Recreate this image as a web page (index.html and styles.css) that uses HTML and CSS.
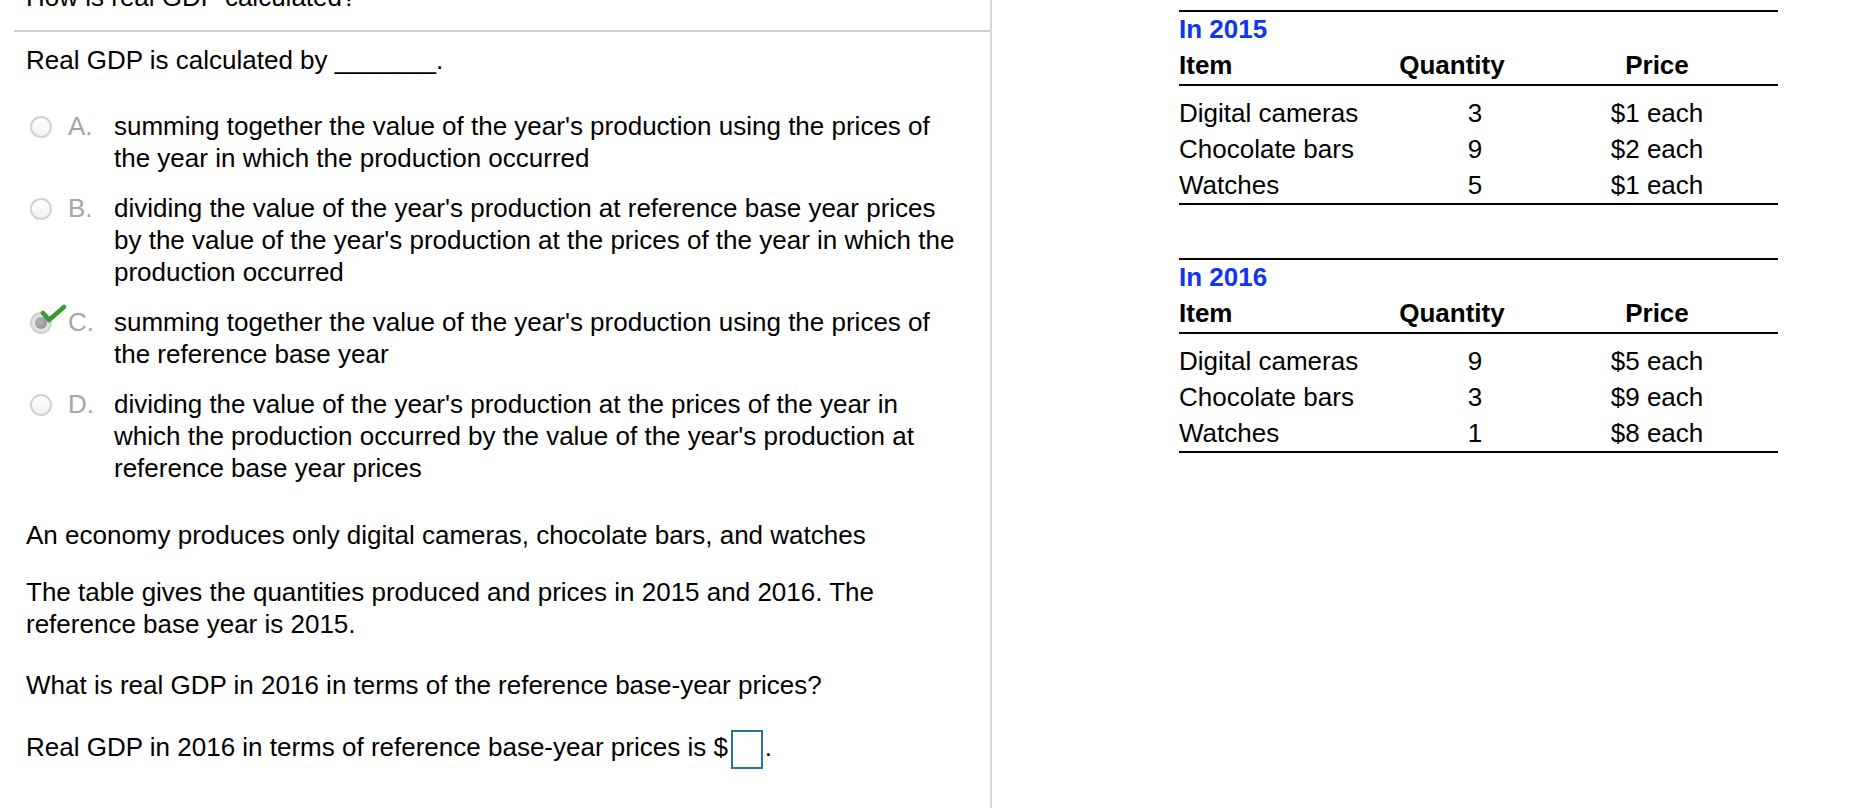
FILE: index.html
```html
<!DOCTYPE html>
<html lang="en">
<head>
    <meta charset="UTF-8">
    <meta name="viewport" content="width=device-width, initial-scale=1.0">
    <title>Real GDP</title>
    <link rel="stylesheet" href="styles.css">
</head>
<body>
    <div class="page">
        <div class="question-pane">
            <div class="question-title">How is real GDP calculated?</div>

            <div class="question-body">
                <p class="prompt">Real GDP is calculated by _______.</p>

                <ul class="choices">
                    <li class="choice">
                        <span class="radio"></span>
                        <span class="letter">A.</span>
                        <span class="choice-text">summing together the value of the year's production using the prices of the year in which the production occurred</span>
                    </li>
                    <li class="choice">
                        <span class="radio"></span>
                        <span class="letter">B.</span>
                        <span class="choice-text">dividing the value of the year's production at reference base year prices by the value of the year's production at the prices of the year in which the production occurred</span>
                    </li>
                    <li class="choice">
                        <span class="radio checked">
                            <svg class="check" width="28" height="22" viewBox="0 0 28 22">
                                <path d="M3 9 L9 16 L24 3" fill="none" stroke="#3a9a30" stroke-width="4.5" stroke-linecap="round" stroke-linejoin="round"/>
                            </svg>
                        </span>
                        <span class="letter">C.</span>
                        <span class="choice-text">summing together the value of the year's production using the prices of the reference base year</span>
                    </li>
                    <li class="choice">
                        <span class="radio"></span>
                        <span class="letter">D.</span>
                        <span class="choice-text">dividing the value of the year's production at the prices of the year in which the production occurred by the value of the year's production at reference base year prices</span>
                    </li>
                </ul>

                <p class="info first">An economy produces only digital cameras, chocolate bars, and watches</p>
                <p class="info">The table gives the quantities produced and prices in 2015 and 2016. The reference base year is 2015.</p>
                <p class="info">What is real GDP in 2016 in terms of the reference base-year prices?</p>
                <p class="info answer-line">Real GDP in 2016 in terms of reference base-year prices is $<span class="answer-box"></span>.</p>
            </div>
        </div>

        <div class="data-pane">
            <div class="data-table">
                <div class="table-year">In 2015</div>
                <div class="table-head">
                    <span>Item</span>
                    <span class="center">Quantity</span>
                    <span class="center">Price</span>
                </div>
                <div class="table-rows">
                    <div class="table-row"><span>Digital cameras</span><span class="qty">3</span><span class="center">$1 each</span></div>
                    <div class="table-row"><span>Chocolate bars</span><span class="qty">9</span><span class="center">$2 each</span></div>
                    <div class="table-row"><span>Watches</span><span class="qty">5</span><span class="center">$1 each</span></div>
                </div>
            </div>

            <div class="data-table second">
                <div class="table-year">In 2016</div>
                <div class="table-head">
                    <span>Item</span>
                    <span class="center">Quantity</span>
                    <span class="center">Price</span>
                </div>
                <div class="table-rows">
                    <div class="table-row"><span>Digital cameras</span><span class="qty">9</span><span class="center">$5 each</span></div>
                    <div class="table-row"><span>Chocolate bars</span><span class="qty">3</span><span class="center">$9 each</span></div>
                    <div class="table-row"><span>Watches</span><span class="qty">1</span><span class="center">$8 each</span></div>
                </div>
            </div>
        </div>
    </div>
</body>
</html>
```

FILE: styles.css
```css
body {
    margin: 0;
    font-family: "Liberation Sans", Arial, sans-serif;
    font-size: 26px;
    line-height: 32px;
    color: #000;
    background: #fff;
    overflow: hidden;
}

p {
    margin: 0;
}

.page {
    display: flex;
    height: 808px;
}

.question-pane {
    width: 990px;
    border-right: 2px solid #d9d9d9;
    overflow: hidden;
}

.question-title {
    margin: -19px 0 0 14px;
    padding: 0 0 17px 12px;
    border-bottom: 2px solid #cdd0da;
}

.question-body {
    padding: 12px 24px 0 26px;
}

.choices {
    list-style: none;
    margin: 34px 0 0;
    padding: 0;
}

.choice {
    display: flex;
    align-items: flex-start;
    margin-bottom: 18px;
}

.choice:last-child {
    margin-bottom: 0;
}

.radio {
    position: relative;
    flex: none;
    width: 18px;
    height: 18px;
    margin: 6px 0 0 4px;
    border: 2px solid #d2d2d2;
    border-radius: 50%;
    background: linear-gradient(#ffffff, #f2f2f2);
}

.radio.checked {
    background: #e4e4e4;
    border-color: #d0d0d0;
}

.radio.checked::after {
    content: "";
    position: absolute;
    left: 3px;
    top: 3px;
    width: 12px;
    height: 12px;
    border-radius: 50%;
    background: radial-gradient(circle at 40% 40%, #b4b4b4, #8c8c8c);
}

.check {
    position: absolute;
    left: 8px;
    top: -10px;
    z-index: 1;
}

.letter {
    flex: none;
    width: 46px;
    margin-left: 16px;
    color: #a6a6a6;
}

.choice-text {
    flex: 1;
}

.info {
    margin-top: 25px;
}

.info.first {
    margin-top: 35px;
}

.info + .info + .info {
    margin-top: 29px;
}

.info.answer-line {
    margin-top: 30px;
}

.answer-box {
    display: inline-block;
    width: 28px;
    height: 35px;
    margin: 0 2px 0 3px;
    border: 2px solid #2f7398;
    vertical-align: middle;
}

.data-pane {
    flex: 1;
    padding: 10px 0 0 187px;
}

.data-table {
    width: 599px;
    border-top: 2px solid #000;
    border-bottom: 2px solid #000;
}

.data-table.second {
    margin-top: 53px;
}

.table-year {
    margin-top: 1px;
    color: #1035f0;
    font-weight: bold;
}

.table-head,
.table-row {
    display: grid;
    grid-template-columns: 189px 168px 1fr;
}

.table-head {
    margin-top: 4px;
    padding-bottom: 3px;
    border-bottom: 2px solid #000;
    font-weight: bold;
}

.table-rows {
    padding-top: 9px;
}

.table-row {
    line-height: 36px;
}

.center {
    text-align: center;
}

.qty {
    text-align: center;
    padding-left: 46px;
}
```
